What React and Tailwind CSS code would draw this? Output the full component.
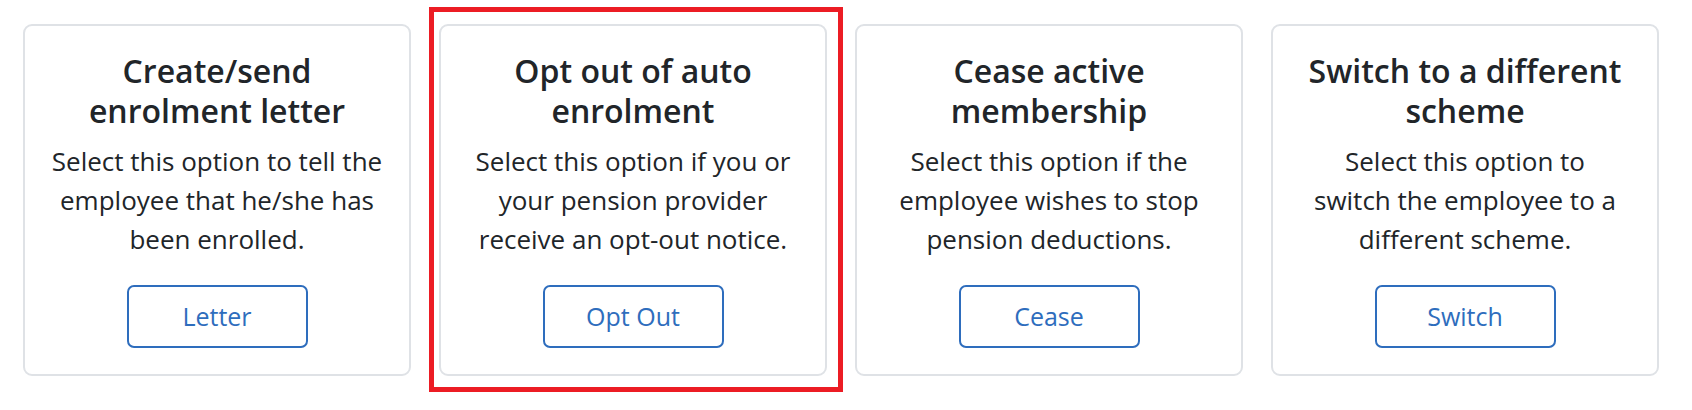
import React from "react";

const options = [
    {
        title: ["Create/send", "enrolment letter"],
        text: ["Select this option to tell the", "employee that he/she has", "been enrolled."],
        action: "Letter",
    },
    {
        title: ["Opt out of auto", "enrolment"],
        text: ["Select this option if you or", "your pension provider", "receive an opt-out notice."],
        action: "Opt Out",
        highlighted: true,
    },
    {
        title: ["Cease active", "membership"],
        text: ["Select this option if the", "employee wishes to stop", "pension deductions."],
        action: "Cease",
    },
    {
        title: ["Switch to a different", "scheme"],
        text: ["Select this option to", "switch the employee to a", "different scheme."],
        action: "Switch",
    },
];

function Lines({ lines }) {
    return lines.map((line, i) => (
        <React.Fragment key={i}>
            {line}
            {i < lines.length - 1 && <br />}
        </React.Fragment>
    ));
}

function OptionCard({ title, text, action, highlighted }) {
    return (
        <div className="relative w-[388px] h-[352px] shrink-0 rounded-[9px] border-2 border-[#dfe2e6] bg-white flex flex-col items-center text-center pt-[25px]">
            {highlighted && (
                <div className="absolute -left-[12px] -right-[18px] -top-[19px] -bottom-[18px] border-[5px] border-[#ec1c24] pointer-events-none" />
            )}
            <h3 className="text-[32px] leading-[40px] font-semibold text-[#212529]">
                <Lines lines={title} />
            </h3>
            <p className="mt-[11px] text-[26px] leading-[39px] text-[#212529]">
                <Lines lines={text} />
            </p>
            <button className="mt-[26px] w-[181px] h-[63px] rounded-[7px] border-2 border-[#2e6dbd] text-[25px] text-[#2e6dbd] bg-white">
                {action}
            </button>
        </div>
    );
}

export default function App() {
    return (
        <div className="w-[1692px] h-[410px] bg-white flex gap-[28px] pl-[23px] pt-[24px] font-['Open_Sans','Noto_Sans',sans-serif]">
            {options.map((o) => (
                <OptionCard key={o.action} {...o} />
            ))}
        </div>
    );
}
